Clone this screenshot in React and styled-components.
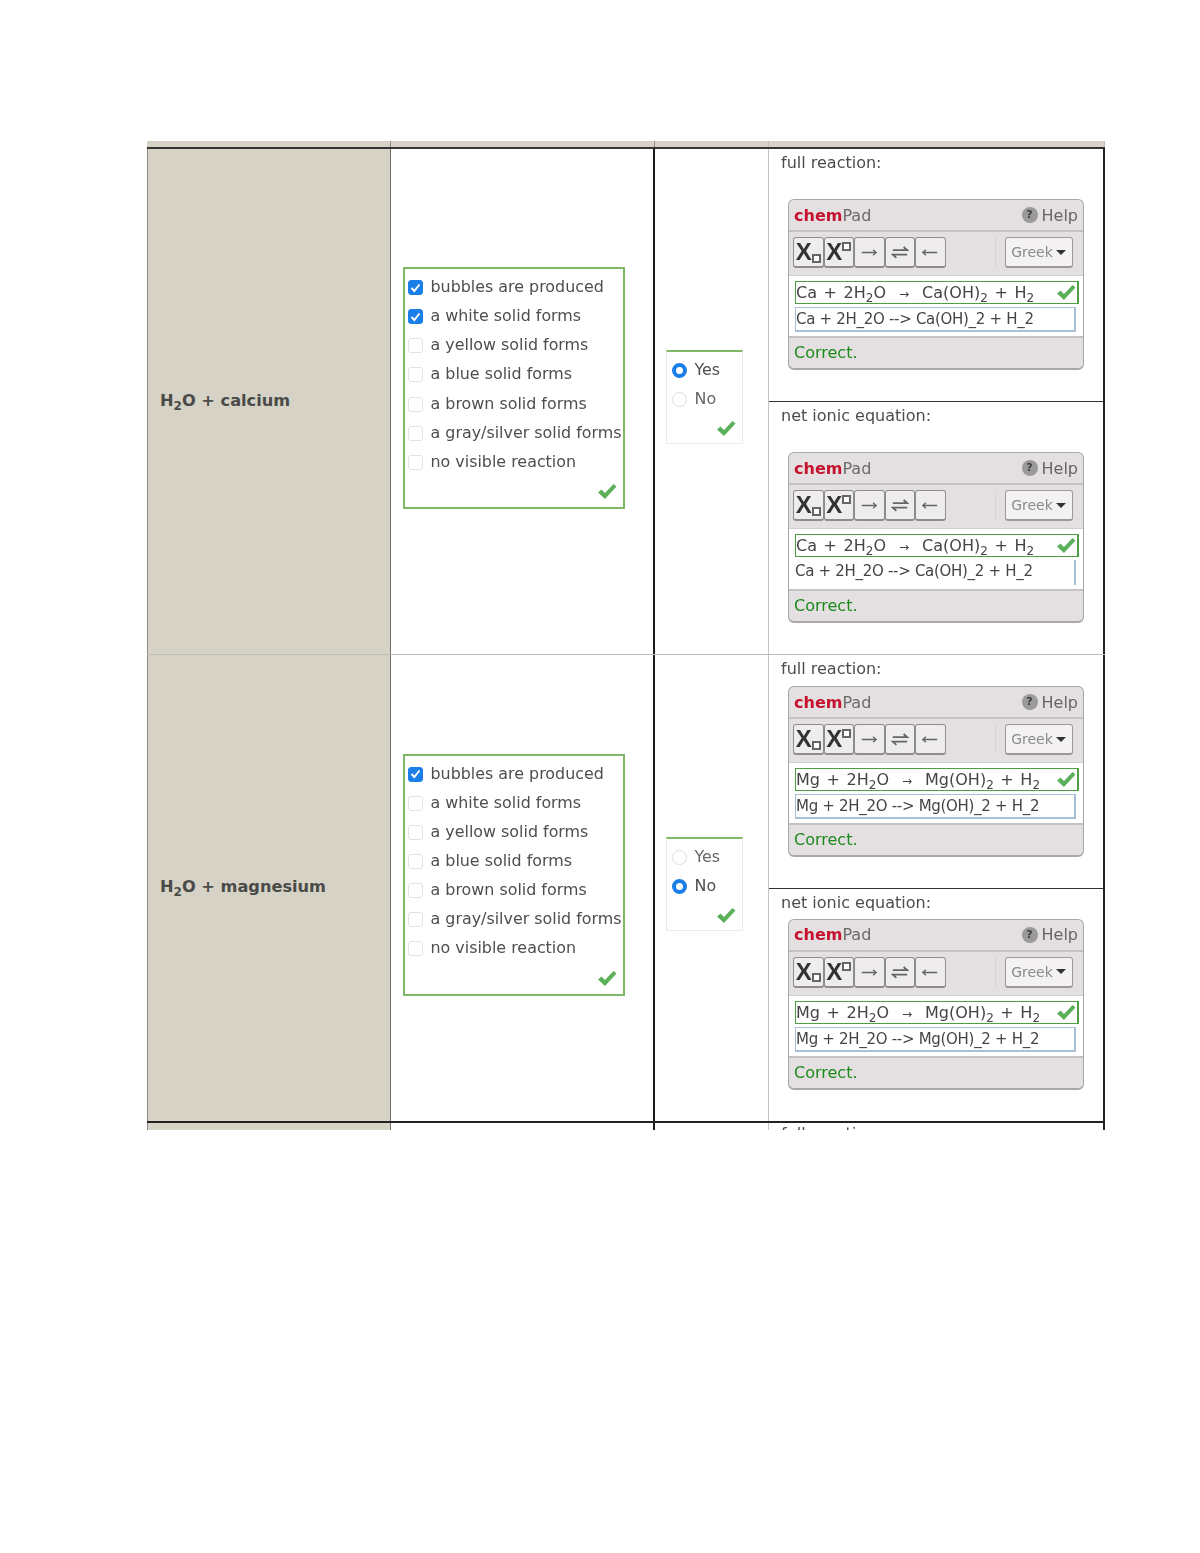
import React from "react";
import styled, { createGlobalStyle } from "styled-components";

const Global = createGlobalStyle`
  html, body { margin: 0; padding: 0; background: #fff; }
  body { font-family: "DejaVu Sans", Verdana, sans-serif; color: #444; }
`;

const Page = styled.div`
  width: 1200px;
  height: 1553px;
  padding: 141px 0 0 147px;
  box-sizing: border-box;
  background: #fff;
`;
const Table = styled.div`
  width: 958px;
  height: 989px;
  overflow: hidden;
  filter: blur(0.55px);
`;
const Columns = styled.div`
  display: grid;
  grid-template-columns: 244px 264px 114px 336px;
  height: ${p => p.$height}px;
  border-bottom: ${p => p.$line || "1px solid #bdbdb8"};
`;
const HeadCell = styled.div`
  background: #d6d2c6;
  border-right: 1px solid ${p => p.$line || "#c0bdb2"};
`;
const NameCell = styled.div`
  background: #d6d2c6;
  border-left: 1px solid #8c8c88;
  border-right: 1px solid #6f6f6a;
  display: flex;
  align-items: center;
  padding: 0 0 3px 12px;
  box-sizing: border-box;
  font-weight: bold;
  font-size: 16.2px;
  color: #4a4a48;
`;
const NameSub = styled.sub`
  font-size: 12px;
  line-height: 0;
`;
const MiddleCell = styled.div`
  border-right: 2px solid ${p => p.$line || "#1c1c1c"};
  display: flex;
  align-items: center;
  justify-content: center;
  padding-right: ${p => p.$shift || 0}px;
  box-sizing: border-box;
`;
const ReactionCell = styled.div`
  display: flex;
  flex-direction: column;
  border-left: 1px solid #c4c4c4;
  border-right: 2px solid #222;
  box-sizing: border-box;
  margin-left: -1px;
`;
const ReactionBlock = styled.div`
  flex: 1;
  padding: 4px 0 0 12px;
  & + & { border-top: 1px solid #333; }
`;
const BlockTitle = styled.div`
  font-size: 16px;
  line-height: 20px;
  color: #4c4c4c;
  margin-top: ${p => p.$lift || 0}px;
  margin-bottom: ${p => p.$gap}px;
`;

const Pad = styled.div`
  width: 296px;
  box-sizing: border-box;
  margin-left: 7px;
  border: 1px solid #a9a7a7;
  border-bottom-width: 2px;
  border-radius: 6px;
  background: #e4e0e1;
  overflow: hidden;
`;
const PadTitle = styled.div`
  height: 30px;
  display: flex;
  align-items: center;
  justify-content: space-between;
  padding: 0 5px;
  border-bottom: 2px solid #c4c2c2;
  font-size: 16px;
`;
const Logo = styled.span`
  color: #6a6a6a;
  b { color: #c4122f; }
`;
const Help = styled.span`
  display: flex;
  align-items: center;
  gap: 4px;
  color: #666;
`;
const HelpDot = styled.span`
  width: 16px;
  height: 16px;
  border-radius: 50%;
  background: #9a9a9a;
  color: #3f3f3f;
  font-size: 11px;
  font-weight: bold;
  line-height: 16px;
  text-align: center;
`;
const Toolbar = styled.div`
  height: 38px;
  padding: 5px 4px 0;
  display: flex;
  align-items: flex-start;
  border-bottom: 1px solid #d0cece;
`;
const ToolGroup = styled.div`
  display: flex;
`;
const ToolButton = styled.div`
  width: 30.5px;
  height: 31px;
  box-sizing: border-box;
  border: 1px solid #8d8d8d;
  border-bottom-width: 2px;
  border-radius: 3px;
  background: #eeecec;
  color: #333;
  font-family: "Liberation Sans", Arial, sans-serif;
  font-size: 24px;
  font-weight: bold;
  display: flex;
  align-items: center;
  justify-content: center;
`;
const Slot = styled.span`
  display: inline-block;
  flex: none;
  width: 5px;
  height: 5px;
  border: 2px solid #666;
  background: #fff;
  margin-top: ${p => (p.$up ? "-11px" : "12px")};
`;
const ToolDivider = styled.div`
  width: 1px;
  height: 30px;
  margin-left: 49px;
  background: #d6d4d4;
`;
const GreekButton = styled.div`
  width: 68px;
  height: 31px;
  margin-left: 9px;
  box-sizing: border-box;
  border: 1px solid #9a9a9a;
  border-bottom-width: 2px;
  border-radius: 3px;
  background: #f3f1f1;
  color: #8a8a8a;
  font-size: 14px;
  display: flex;
  align-items: center;
  justify-content: center;
  gap: 3px;
`;
const Caret = styled.span`
  border: 5px solid transparent;
  border-top-color: #333;
  border-bottom-width: 0;
`;
const Editor = styled.div`
  background: #fff;
  height: 62px;
  padding: 5px 5px 0 6px;
  box-sizing: border-box;
  border-bottom: 2px solid #c4c2c2;
`;
const Rendered = styled.div`
  width: 284px;
  height: 23px;
  box-sizing: border-box;
  border: 1px solid #4f9e45;
  border-width: 1px 2px 1px 1px;
  display: flex;
  align-items: center;
  justify-content: space-between;
  font-size: 16px;
  word-spacing: 1.5px;
  color: #444;
  white-space: pre;
  padding-right: 1px;
`;
const RenderedSub = styled.sub`
  font-size: 12px;
  line-height: 0;
`;
const RenderedArrow = styled.span`
  font-size: 12px;
  margin: 0 13px;
`;
const SourceInput = styled.div`
  width: 281px;
  height: 25px;
  margin-top: 3px;
  box-sizing: border-box;
  border: 1px solid #a8bfd8;
  border-width: ${p => (p.$open ? "0 2px 0 0" : "1px 2px 2px 1px")};
  font-size: 15px;
  line-height: 23px;
  color: #444;
  white-space: pre;
  letter-spacing: -0.3px;
`;
const PadStatus = styled.div`
  height: 30px;
  padding-left: 5px;
  font-size: 16px;
  line-height: 29px;
  color: #1d8a1d;
`;

const CheckList = styled.div`
  width: 222px;
  height: 242px;
  box-sizing: border-box;
  border: 2px solid #7fb866;
  padding: 3px 0 0 3px;
  position: relative;
  margin-top: ${p => p.$offset}px;
`;
const Option = styled.div`
  height: 29.15px;
  display: flex;
  align-items: center;
  gap: 8px;
  font-size: 15.9px;
  color: ${p => (p.$dim ? "#666" : "#4e4e4e")};
  white-space: nowrap;
`;
const Box = styled.span`
  flex: none;
  width: 15px;
  height: 15px;
  box-sizing: border-box;
  border-radius: 3px;
  margin-top: 2px;
  border: 1px solid ${p => (p.$on ? "#1a7fe8" : "#e2e2e2")};
  background: ${p => (p.$on ? "#1a7fe8" : "#fff")};
  display: flex;
  align-items: center;
  justify-content: center;
`;
const RadioList = styled.div`
  width: 77px;
  height: 94px;
  box-sizing: border-box;
  border: 1px solid #e9efe6;
  border-top: 2px solid #7fb866;
  padding: 3px 0 0 5px;
  position: relative;
  margin-top: ${p => p.$offset}px;
`;
const Radio = styled.span`
  flex: none;
  width: 15px;
  height: 15px;
  box-sizing: border-box;
  border-radius: 50%;
  margin-top: 2px;
  background: #fff;
  border: ${p => (p.$on ? "4px solid #1a7fe8" : "1px solid #dcdcdc")};
`;
const MarkSlot = styled.span`
  position: absolute;
  right: ${p => p.$right}px;
  bottom: ${p => p.$bottom}px;
  display: flex;
`;

const Mark = ({ size = 20 }) => (
  <svg width={size} height={size * 0.85} viewBox="0 0 20 17">
    <path d="M1 9.5 L4.5 6.5 L8 10 L16.5 1 L19.5 3.5 L8 16 Z" fill="#5cb05a" />
  </svg>
);

const Tick = () => (
  <svg width="11" height="10" viewBox="0 0 11 10">
    <path d="M1.5 5 L4.3 8 L9.5 1.5" fill="none" stroke="#fff" strokeWidth="2" />
  </svg>
);

const OPTIONS = [
  "bubbles are produced",
  "a white solid forms",
  "a yellow solid forms",
  "a blue solid forms",
  "a brown solid forms",
  "a gray/silver solid forms",
  "no visible reaction",
];

const Arrow = ({ d, weight = 1.5 }) => (
  <svg width="18" height="16" viewBox="0 0 20 16" fill="none" stroke="#666" strokeWidth={weight}>
    <path d={d} />
  </svg>
);

const ChemPad = ({ metal, open }) => (
  <Pad>
    <PadTitle>
      <Logo><b>chem</b>Pad</Logo>
      <Help><HelpDot>?</HelpDot>Help</Help>
    </PadTitle>
    <Toolbar>
      <ToolGroup>
        <ToolButton>X<Slot /></ToolButton>
        <ToolButton>X<Slot $up /></ToolButton>
        <ToolButton><Arrow d="M2 8.5 H18 M14.5 5.5 L18 8.5 L14.5 11.5" /></ToolButton>
        <ToolButton><Arrow weight={2} d="M2 6 H18 L14 2.5 M18 11 H2 L6 14.5" /></ToolButton>
        <ToolButton><Arrow d="M18 8.5 H2 M5.5 5.5 L2 8.5 L5.5 11.5" /></ToolButton>
      </ToolGroup>
      <ToolDivider />
      <GreekButton>Greek<Caret /></GreekButton>
    </Toolbar>
    <Editor>
      <Rendered>
        <span>
          {metal} + 2H<RenderedSub>2</RenderedSub>O<RenderedArrow>→</RenderedArrow>{metal}(OH)<RenderedSub>2</RenderedSub> + H<RenderedSub>2</RenderedSub>
        </span>
        <Mark />
      </Rendered>
      <SourceInput $open={open}>{metal} + 2H_2O --&gt; {metal}(OH)_2 + H_2</SourceInput>
    </Editor>
    <PadStatus>Correct.</PadStatus>
  </Pad>
);

const Reaction = ({ title, gap, metal, open }) => (
  <ReactionBlock>
    <BlockTitle $gap={gap}>{title}</BlockTitle>
    <ChemPad metal={metal} open={open} />
  </ReactionBlock>
);

const Row = ({ name, metal, height, checked, answer, gaps, line, listOffset, radioOffset, open }) => (
  <Columns $height={height} $line={line}>
    <NameCell>
      <span>H<NameSub>2</NameSub>O + {name}</span>
    </NameCell>
    <MiddleCell $shift={17}>
      <CheckList $offset={listOffset}>
        {OPTIONS.map((o, i) => (
          <Option key={o}>
            <Box $on={checked.includes(i)}>{checked.includes(i) && <Tick />}</Box>
            {o}
          </Option>
        ))}
        <MarkSlot $right={6} $bottom={7}><Mark /></MarkSlot>
      </CheckList>
    </MiddleCell>
    <MiddleCell $line="transparent" $shift={14}>
      <RadioList $offset={radioOffset}>
        {["Yes", "No"].map(o => (
          <Option key={o} $dim={o !== answer}>
            <Radio $on={o === answer} />
            {o}
          </Option>
        ))}
        <MarkSlot $right={6} $bottom={6}><Mark /></MarkSlot>
      </RadioList>
    </MiddleCell>
    <ReactionCell>
      <Reaction title="full reaction:" gap={gaps[0]} metal={metal} />
      <Reaction title="net ionic equation:" gap={gaps[1]} metal={metal} open={open} />
    </ReactionCell>
  </Columns>
);

export default function App() {
  return (
    <>
      <Global />
      <Page>
        <Table>
          <Columns $height={6} $line="2px solid #333">
            <HeadCell $line="#8d8b82" />
            <HeadCell $line="#8d8b82" />
            <HeadCell />
            <HeadCell />
          </Columns>
          <Row
            name="calcium"
            metal="Ca"
            height={505}
            checked={[0, 1]}
            answer="Yes"
            gaps={[26, 26]}
            listOffset={-27}
            radioOffset={-9}
            open
          />
          <Row
            name="magnesium"
            metal="Mg"
            height={466}
            checked={[0]}
            answer="No"
            gaps={[7, 6]}
            listOffset={-27}
            radioOffset={-9}
            line="2px solid #222"
          />
          <Columns $height={8}>
            <NameCell />
            <MiddleCell />
            <MiddleCell $line="transparent" />
            <ReactionCell>
              <ReactionBlock>
                <BlockTitle $gap={0} $lift={-3}>full reaction:</BlockTitle>
              </ReactionBlock>
            </ReactionCell>
          </Columns>
        </Table>
      </Page>
    </>
  );
}
